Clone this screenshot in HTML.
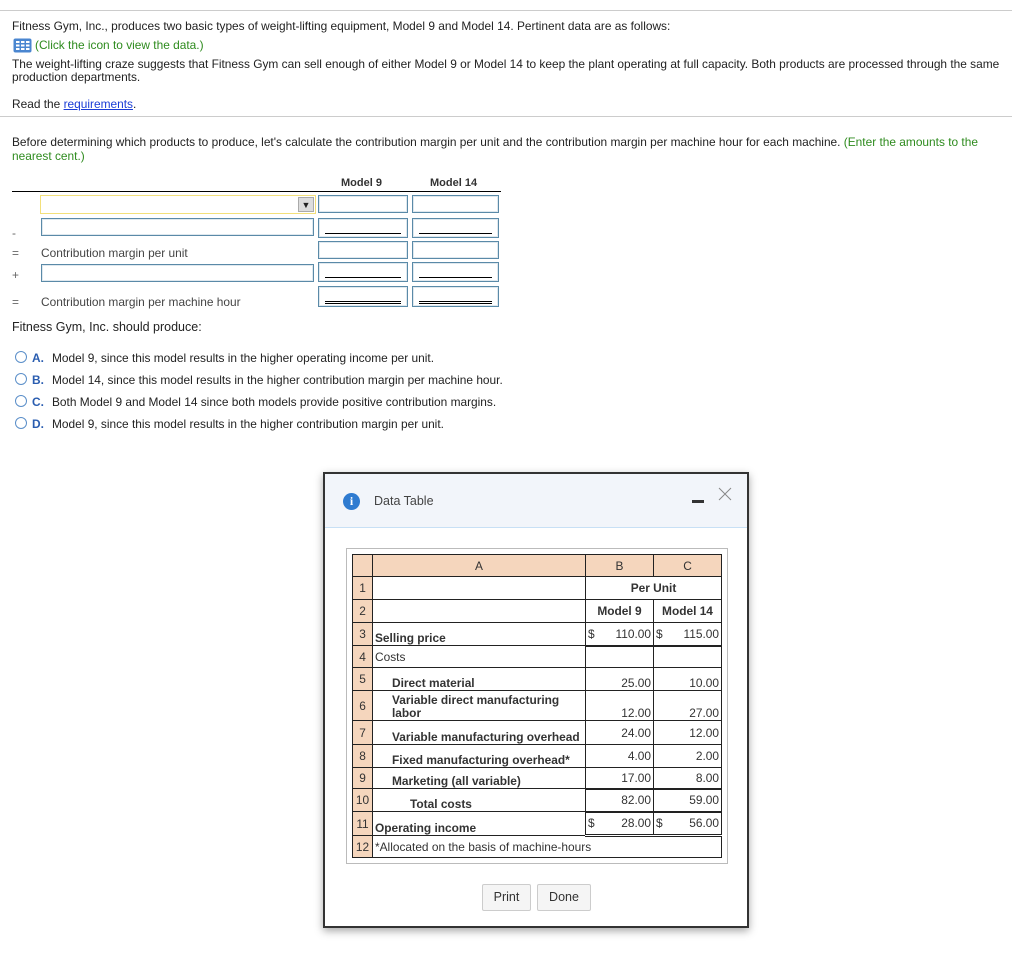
<!DOCTYPE html>
<html><head><meta charset="utf-8"><style>
*{box-sizing:border-box;margin:0;padding:0}
body{width:1024px;height:958px;background:#fff;font-family:"Liberation Sans",Arial,sans-serif;font-size:11.9px;color:#222;position:relative;overflow:hidden}
.a{position:absolute;white-space:nowrap}
.hr{position:absolute;height:1px;background:#ccc}
.box{position:absolute;border:1px solid #5a8aa8;background:#fff;box-shadow:inset 0 0 0 1px #dfe8ee}
.ul{position:absolute;left:6px;right:6px;height:1px;background:#000}
.rad{position:absolute;width:12px;height:12px;border:1px solid #5b8fc9;border-radius:50%}
.lt{position:absolute;color:#2a5db0;font-weight:bold}
table{position:absolute;left:352px;top:554px;border-collapse:collapse;font-size:11.9px;table-layout:fixed;width:369px}
td{border:1px solid #222;padding:0 2px;vertical-align:bottom;color:#333;white-space:nowrap;overflow:hidden}
td.n{background:#f5d6bd;text-align:center;vertical-align:middle;padding:0}
td.h{background:#f5d6bd;text-align:center;vertical-align:middle;font-weight:normal}
.b{font-weight:bold}
.r{text-align:right}
.sp{display:flex;justify-content:space-between}
.btn{position:absolute;border:1px solid #ccc;border-radius:2px;background:#f5f5f5;font-size:12.5px;color:#333;text-align:center;line-height:25px;height:27px}
</style></head><body>
<div class="hr" style="left:0;top:10px;width:1012px"></div>
<div class="a" style="left:12px;top:19px">Fitness Gym, Inc., produces two basic types of weight-lifting equipment, Model 9 and Model 14. Pertinent data are as follows:</div>
<svg class="a" style="left:13px;top:38px" width="19" height="15" viewBox="0 0 19 15"><rect x="0.5" y="0.5" width="18" height="14" rx="2" fill="#4a86d0"/><g fill="#fff"><rect x="3" y="3" width="3.5" height="2"/><rect x="8" y="3" width="3.5" height="2"/><rect x="13" y="3" width="3.5" height="2"/><rect x="3" y="6.5" width="3.5" height="2"/><rect x="8" y="6.5" width="3.5" height="2"/><rect x="13" y="6.5" width="3.5" height="2"/><rect x="3" y="10" width="3.5" height="2"/><rect x="8" y="10" width="3.5" height="2"/><rect x="13" y="10" width="3.5" height="2"/></g></svg>
<div class="a" style="left:35px;top:38px;color:#2e8b1e">(Click the icon to view the data.)</div>
<div class="a" style="left:12px;top:57px">The weight-lifting craze suggests that Fitness Gym can sell enough of either Model 9 or Model 14 to keep the plant operating at full capacity. Both products are processed through the same</div>
<div class="a" style="left:12px;top:70px">production departments.</div>
<div class="a" style="left:12px;top:97px">Read the <span style="color:#1a3cd6;text-decoration:underline">requirements</span>.</div>
<div class="hr" style="left:0;top:116px;width:1012px"></div>
<div class="a" style="left:12px;top:135px">Before determining which products to produce, let's calculate the contribution margin per unit and the contribution margin per machine hour for each machine. <span style="color:#2e8b1e">(Enter the amounts to the</span></div>
<div class="a" style="left:12px;top:149px;color:#2e8b1e">nearest cent.)</div>

<div class="a b" style="left:341px;top:177px;color:#333;font-size:11px">Model 9</div>
<div class="a b" style="left:430px;top:177px;color:#333;font-size:11px">Model 14</div>
<div class="a" style="left:12px;top:191px;width:489px;height:1px;background:#000"></div>
<div class="a" style="left:40px;top:195px;width:276px;height:19px;border:1px solid #f3e07a;background:#fff"></div>
<div class="a" style="left:298px;top:197px;width:16px;height:15px;background:#ddd;border:1px solid #aaa;font-size:9px;text-align:center;line-height:14px">▼</div>
<div class="box" style="left:41px;top:218px;width:273px;height:18px"></div>
<div class="box" style="left:41px;top:264px;width:273px;height:18px"></div>
<div class="a" style="left:12px;top:226px;color:#666">-</div>
<div class="a" style="left:12px;top:246px;color:#666">=</div>
<div class="a" style="left:41px;top:246px;color:#444">Contribution margin per unit</div>
<div class="a" style="left:12px;top:268px;color:#666">+</div>
<div class="a" style="left:12px;top:295px;color:#666">=</div>
<div class="a" style="left:41px;top:295px;color:#444">Contribution margin per machine hour</div>

<div class="box" style="left:318px;top:195px;width:90px;height:18px"></div>
<div class="box" style="left:412px;top:195px;width:87px;height:18px"></div>
<div class="box" style="left:318px;top:218px;width:90px;height:20px"><div class="ul" style="top:14px"></div></div>
<div class="box" style="left:412px;top:218px;width:87px;height:20px"><div class="ul" style="top:14px"></div></div>
<div class="box" style="left:318px;top:241px;width:90px;height:18px"></div>
<div class="box" style="left:412px;top:241px;width:87px;height:18px"></div>
<div class="box" style="left:318px;top:262px;width:90px;height:20px"><div class="ul" style="top:14px"></div></div>
<div class="box" style="left:412px;top:262px;width:87px;height:20px"><div class="ul" style="top:14px"></div></div>
<div class="box" style="left:318px;top:286px;width:90px;height:21px"><div class="ul" style="top:14px"></div><div class="ul" style="top:16px"></div></div>
<div class="box" style="left:412px;top:286px;width:87px;height:21px"><div class="ul" style="top:14px"></div><div class="ul" style="top:16px"></div></div>

<div class="a" style="left:12px;top:320px;font-size:12.5px">Fitness Gym, Inc. should produce:</div>
<div class="rad" style="left:15px;top:351px"></div><div class="lt" style="left:32px;top:351px">A.</div><div class="a" style="left:52px;top:351px">Model 9, since this model results in the higher operating income per unit.</div>
<div class="rad" style="left:15px;top:373px"></div><div class="lt" style="left:32px;top:373px">B.</div><div class="a" style="left:52px;top:373px">Model 14, since this model results in the higher contribution margin per machine hour.</div>
<div class="rad" style="left:15px;top:395px"></div><div class="lt" style="left:32px;top:395px">C.</div><div class="a" style="left:52px;top:395px">Both Model 9 and Model 14 since both models provide positive contribution margins.</div>
<div class="rad" style="left:15px;top:417px"></div><div class="lt" style="left:32px;top:417px">D.</div><div class="a" style="left:52px;top:417px">Model 9, since this model results in the higher contribution margin per unit.</div>

<div class="a" style="left:323px;top:472px;width:426px;height:456px;border:2px solid #333;background:#fff;box-shadow:0 3px 8px rgba(0,0,0,.35)">
 <div style="position:absolute;left:0;top:0;right:0;height:54px;background:#f2f5fa;border-bottom:1px solid #c8e0f5"></div>
 <div style="position:absolute;left:18px;top:19px;width:17px;height:17px;border-radius:50%;background:#2f7bd0;color:#fff;font-weight:bold;font-size:12px;text-align:center;line-height:17px;font-family:'Liberation Serif',serif">i</div>
 <div style="position:absolute;left:49px;top:20px;font-size:12.5px;color:#444">Data Table</div>
 <div style="position:absolute;left:367px;top:26px;width:12px;height:3px;background:#333"></div>
 <svg style="position:absolute;left:393px;top:13px" width="14" height="14"><path d="M1 1L13 13M13 1L1 13" stroke="#888" stroke-width="1"/></svg>
 <div style="position:absolute;left:21px;top:74px;width:382px;height:316px;border:1px solid #bbb"></div>
</div>

<table>
<colgroup><col style="width:20px"><col style="width:213px"><col style="width:68px"><col style="width:68px"></colgroup>
<tr style="height:22px"><td class="n"></td><td class="h">A</td><td class="h">B</td><td class="h">C</td></tr>
<tr style="height:23px"><td class="n">1</td><td></td><td colspan="2" class="b" style="text-align:center;vertical-align:middle">Per Unit</td></tr>
<tr style="height:23px"><td class="n">2</td><td></td><td class="b" style="text-align:center;vertical-align:middle">Model 9</td><td class="b" style="text-align:center;vertical-align:middle">Model 14</td></tr>
<tr style="height:23px"><td class="n">3</td><td class="b">Selling price</td><td style="border-bottom:2px solid #222;vertical-align:middle"><div class="sp"><span>$</span><span>110.00</span></div></td><td style="border-bottom:2px solid #222;vertical-align:middle"><div class="sp"><span>$</span><span>115.00</span></div></td></tr>
<tr style="height:22px"><td class="n">4</td><td style="vertical-align:middle">Costs</td><td></td><td></td></tr>
<tr style="height:23px"><td class="n">5</td><td class="b" style="padding-left:19px">Direct material</td><td class="r">25.00</td><td class="r">10.00</td></tr>
<tr style="height:30px"><td class="n">6</td><td class="b" style="padding-left:19px;line-height:13px">Variable direct manufacturing<br>labor</td><td class="r">12.00</td><td class="r">27.00</td></tr>
<tr style="height:24px"><td class="n">7</td><td class="b" style="padding-left:19px">Variable manufacturing overhead</td><td class="r" style="vertical-align:middle">24.00</td><td class="r" style="vertical-align:middle">12.00</td></tr>
<tr style="height:23px"><td class="n">8</td><td class="b" style="padding-left:19px">Fixed manufacturing overhead*</td><td class="r" style="vertical-align:middle">4.00</td><td class="r" style="vertical-align:middle">2.00</td></tr>
<tr style="height:21px"><td class="n">9</td><td class="b" style="padding-left:19px">Marketing (all variable)</td><td class="r" style="vertical-align:middle">17.00</td><td class="r" style="vertical-align:middle">8.00</td></tr>
<tr style="height:23px"><td class="n">10</td><td class="b" style="padding-left:37px">Total costs</td><td class="r" style="border-top:2px solid #222;border-bottom:2px solid #222;vertical-align:middle">82.00</td><td class="r" style="border-top:2px solid #222;border-bottom:2px solid #222;vertical-align:middle">59.00</td></tr>
<tr style="height:24px"><td class="n">11</td><td class="b">Operating income</td><td style="border-bottom:3px double #222;vertical-align:middle"><div class="sp"><span>$</span><span>28.00</span></div></td><td style="border-bottom:3px double #222;vertical-align:middle"><div class="sp"><span>$</span><span>56.00</span></div></td></tr>
<tr style="height:22px"><td class="n">12</td><td colspan="3" style="vertical-align:middle">*Allocated on the basis of machine-hours</td></tr>
</table>

<div class="btn" style="left:482px;top:884px;width:49px">Print</div>
<div class="btn" style="left:537px;top:884px;width:54px">Done</div>
</body></html>
